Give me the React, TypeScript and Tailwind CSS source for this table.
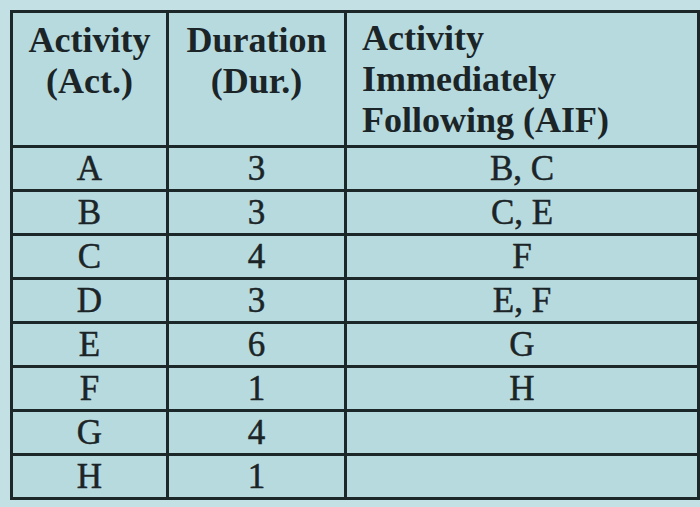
const ROWS: { act: string; dur: string; aif: string }[] = [
    { act: 'A', dur: '3', aif: 'B, C' },
    { act: 'B', dur: '3', aif: 'C, E' },
    { act: 'C', dur: '4', aif: 'F' },
    { act: 'D', dur: '3', aif: 'E, F' },
    { act: 'E', dur: '6', aif: 'G' },
    { act: 'F', dur: '1', aif: 'H' },
    { act: 'G', dur: '4', aif: '' },
    { act: 'H', dur: '1', aif: '' },
];

const cell = 'border-[3px] border-[#1c2729] p-0';

export default function App() {
    return (
        <div
            className="h-[507px] w-[700px] overflow-hidden bg-[#c3e1e5] pt-[10px] pl-[10px] text-[#1b2527]"
            style={{ fontFamily: '"Liberation Serif", "Times New Roman", serif' }}>
            <table className="w-[690px] table-fixed border-collapse bg-[#b7dadf]">
                <colgroup>
                    <col className="w-[156px]" />
                    <col className="w-[178px]" />
                    <col />
                </colgroup>
                <thead>
                    <tr className="h-[135px] align-top text-[36px] leading-[41px] font-bold">
                        <th className={`${cell} pt-[7px] text-center`}>
                            Activity
                            <br />
                            (Act.)
                        </th>
                        <th className={`${cell} pt-[7px] text-center`}>
                            Duration
                            <br />
                            (Dur.)
                        </th>
                        <th className={`${cell} pt-[5px] pl-[15px] text-left`}>
                            Activity
                            <br />
                            Immediately
                            <br />
                            Following (AIF)
                        </th>
                    </tr>
                </thead>
                <tbody>
                    {ROWS.map(row => (
                        <tr
                            key={row.act}
                            className="h-[44px] text-center text-[35px] leading-[38px] [-webkit-text-stroke:0.5px_#1b2527]">
                            <td className={cell}>{row.act}</td>
                            <td className={cell}>{row.dur}</td>
                            <td className={cell}>{row.aif}</td>
                        </tr>
                    ))}
                </tbody>
            </table>
        </div>
    );
}
